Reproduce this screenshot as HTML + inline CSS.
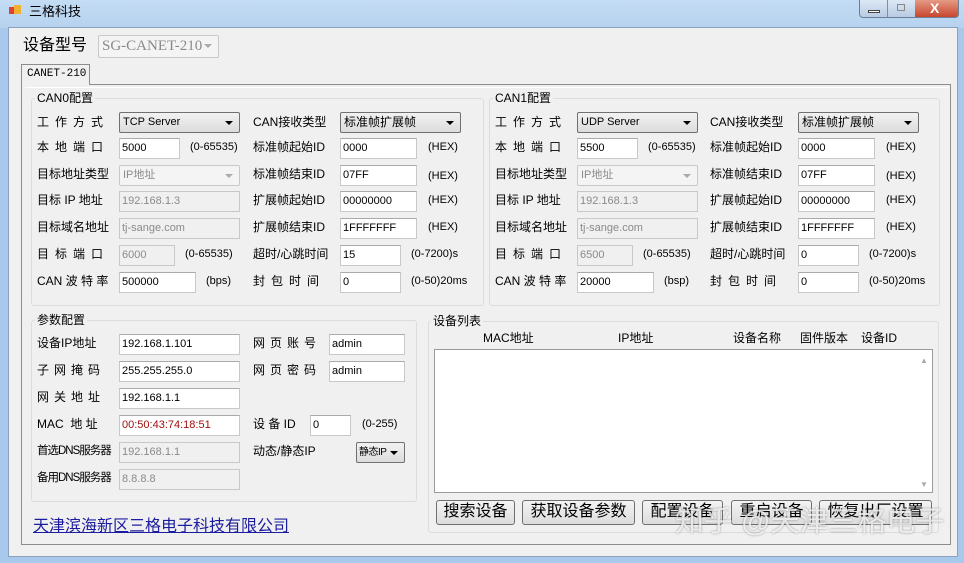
<!DOCTYPE html>
<html><head><meta charset="utf-8"><style>
*{margin:0;padding:0;box-sizing:border-box}
body{width:964px;height:563px;position:relative;overflow:hidden;background:#a9c9ec;font-family:"Liberation Sans","Noto Sans CJK SC",sans-serif;font-size:12px;color:#000}
div,span{position:absolute}
.t{white-space:nowrap;line-height:14px;font-size:12px}
.in{background:#fff;border:1px solid #c8c8c8;border-top-color:#aaa;height:21px;font-size:11px;line-height:19px;padding-left:2px;white-space:nowrap;overflow:hidden}
.dis{background:#f0f0f0;color:#8a8a8a;border-color:#c8c8c8}
.cb{border:1px solid #707070;border-radius:2px;height:21px;background:linear-gradient(#f2f2f2,#dcdcdc);font-size:11px;line-height:19px;padding-left:3px;white-space:nowrap}
.cb:after{content:"";position:absolute;right:6px;top:8px;border-left:4px solid transparent;border-right:4px solid transparent;border-top:4px solid #000}
.cbd{border-color:#c8c8c8;background:#f4f4f4;color:#8a8a8a}
.cbd:after{border-top-color:#aaa}
.grp{border:1px solid #dcdcdc;border-radius:3px}
.gl{background:#f0f0f0;padding:0 2px;font-size:12px;line-height:14px;white-space:nowrap}
.btn{border:1px solid #707070;border-radius:3px;background:linear-gradient(#f4f4f4,#dcdcdc);font-size:16px;text-align:center;line-height:22px;height:25px;white-space:nowrap}
</style></head><body>
<div style="left:0;top:0;width:964px;height:28px;background:linear-gradient(#c4dcf4,#b6d2ef)"></div>
<div style="left:9px;top:7px;width:7px;height:7px;background:#e04030"></div>
<div style="left:14px;top:5px;width:7px;height:9px;background:#f0b030"></div>
<div class="t" style="left:29px;top:5px;font-size:13px">三格科技</div>
<div style="left:859px;top:0;width:100px;height:18px;border:1px solid #6b7e98;border-top:0;border-radius:0 0 4px 4px;background:linear-gradient(#dce8f6,#b9cbe2);overflow:hidden">
 <div style="left:8px;top:10px;width:12px;height:3px;border:1px solid #444;background:#fff"></div>
 <div style="left:27px;top:0;width:1px;height:18px;background:#7d8ea8"></div>
 <div style="left:37px;top:4px;width:8px;height:7px;border:1px solid #888"></div>
 <div style="left:55px;top:0;width:45px;height:18px;background:linear-gradient(#e59a85,#c6412a)"></div>
 <div class="t" style="left:70px;top:1px;color:#fff;font-weight:bold;font-size:14px">X</div>
</div>
<div style="left:8px;top:27px;width:950px;height:530px;background:#f0f0f0;border:1px solid #8aa0bc"></div>
<div class="t" style="left:23px;top:37px;font-size:16px;line-height:18px">设备型号</div>
<div class="cb cbd" style="left:98px;top:35px;width:121px;height:23px;font-size:15px;line-height:21px;font-family:'Liberation Serif','Noto Serif CJK SC',serif">SG-CANET-210</div>
<div style="left:21px;top:84px;width:930px;height:461px;border:1px solid #8c8c8c;background:#f0f0f0"></div>
<div style="left:21px;top:64px;width:69px;height:21px;border:1px solid #8c8c8c;border-bottom:0;background:#f0f0f0"></div>
<div class="t" style="left:27px;top:67px;font-size:11px;font-family:'Liberation Mono',monospace">CANET-210</div>
<div style="left:25px;top:87px;width:924px;height:1px;background:#fff"></div>

<div class="grp" style="left:31px;top:98px;width:453px;height:208px"></div>
<div class="gl" style="left:35px;top:91px">CAN0配置</div>
<div class="grp" style="left:489px;top:98px;width:451px;height:208px"></div>
<div class="gl" style="left:493px;top:91px">CAN1配置</div>

<div class="t" style="left:37px;top:115px;letter-spacing:6px">工作方式</div>
<div class="cb" style="left:119px;top:112px;width:121px">TCP Server</div>
<div class="t" style="left:253px;top:115px">CAN接收类型</div>
<div class="cb" style="left:340px;top:112px;width:121px;font-size:12px">标准帧扩展帧</div>
<div class="t" style="left:37px;top:140px;letter-spacing:6px">本地端口</div>
<div class="in" style="left:119px;top:138px;width:61px">5000</div>
<div class="t" style="left:190px;top:140px;font-size:11px">(0-65535)</div>
<div class="t" style="left:253px;top:140px">标准帧起始ID</div>
<div class="in" style="left:340px;top:138px;width:77px">0000</div>
<div class="t" style="left:428px;top:140px;font-size:11px">(HEX)</div>
<div class="t" style="left:37px;top:167px">目标地址类型</div>
<div class="cb cbd" style="left:119px;top:165px;width:121px">IP地址</div>
<div class="t" style="left:253px;top:167px">标准帧结束ID</div>
<div class="in" style="left:340px;top:165px;width:77px">07FF</div>
<div class="t" style="left:428px;top:169px;font-size:11px">(HEX)</div>
<div class="t" style="left:37px;top:193px">目标 IP 地址</div>
<div class="in dis" style="left:119px;top:191px;width:121px">192.168.1.3</div>
<div class="t" style="left:253px;top:193px">扩展帧起始ID</div>
<div class="in" style="left:340px;top:191px;width:77px">00000000</div>
<div class="t" style="left:428px;top:193px;font-size:11px">(HEX)</div>
<div class="t" style="left:37px;top:220px">目标域名地址</div>
<div class="in dis" style="left:119px;top:218px;width:121px">tj-sange.com</div>
<div class="t" style="left:253px;top:220px">扩展帧结束ID</div>
<div class="in" style="left:340px;top:218px;width:77px">1FFFFFFF</div>
<div class="t" style="left:428px;top:220px;font-size:11px">(HEX)</div>
<div class="t" style="left:37px;top:247px;letter-spacing:6px">目标端口</div>
<div class="in dis" style="left:119px;top:245px;width:56px">6000</div>
<div class="t" style="left:185px;top:247px;font-size:11px">(0-65535)</div>
<div class="t" style="left:253px;top:247px">超时/心跳时间</div>
<div class="in" style="left:340px;top:245px;width:61px">15</div>
<div class="t" style="left:411px;top:247px;font-size:11px">(0-7200)s</div>
<div class="t" style="left:37px;top:274px">CAN 波 特 率</div>
<div class="in" style="left:119px;top:272px;width:77px">500000</div>
<div class="t" style="left:206px;top:274px;font-size:11px">(bps)</div>
<div class="t" style="left:253px;top:274px;letter-spacing:6px">封包时间</div>
<div class="in" style="left:340px;top:272px;width:61px">0</div>
<div class="t" style="left:411px;top:274px;font-size:11px">(0-50)20ms</div>

<div class="t" style="left:495px;top:115px;letter-spacing:6px">工作方式</div>
<div class="cb" style="left:577px;top:112px;width:121px">UDP Server</div>
<div class="t" style="left:710px;top:115px">CAN接收类型</div>
<div class="cb" style="left:798px;top:112px;width:121px;font-size:12px">标准帧扩展帧</div>
<div class="t" style="left:495px;top:140px;letter-spacing:6px">本地端口</div>
<div class="in" style="left:577px;top:138px;width:61px">5500</div>
<div class="t" style="left:648px;top:140px;font-size:11px">(0-65535)</div>
<div class="t" style="left:710px;top:140px">标准帧起始ID</div>
<div class="in" style="left:798px;top:138px;width:77px">0000</div>
<div class="t" style="left:886px;top:140px;font-size:11px">(HEX)</div>
<div class="t" style="left:495px;top:167px">目标地址类型</div>
<div class="cb cbd" style="left:577px;top:165px;width:121px">IP地址</div>
<div class="t" style="left:710px;top:167px">标准帧结束ID</div>
<div class="in" style="left:798px;top:165px;width:77px">07FF</div>
<div class="t" style="left:886px;top:169px;font-size:11px">(HEX)</div>
<div class="t" style="left:495px;top:193px">目标 IP 地址</div>
<div class="in dis" style="left:577px;top:191px;width:121px">192.168.1.3</div>
<div class="t" style="left:710px;top:193px">扩展帧起始ID</div>
<div class="in" style="left:798px;top:191px;width:77px">00000000</div>
<div class="t" style="left:886px;top:193px;font-size:11px">(HEX)</div>
<div class="t" style="left:495px;top:220px">目标域名地址</div>
<div class="in dis" style="left:577px;top:218px;width:121px">tj-sange.com</div>
<div class="t" style="left:710px;top:220px">扩展帧结束ID</div>
<div class="in" style="left:798px;top:218px;width:77px">1FFFFFFF</div>
<div class="t" style="left:886px;top:220px;font-size:11px">(HEX)</div>
<div class="t" style="left:495px;top:247px;letter-spacing:6px">目标端口</div>
<div class="in dis" style="left:577px;top:245px;width:56px">6500</div>
<div class="t" style="left:643px;top:247px;font-size:11px">(0-65535)</div>
<div class="t" style="left:710px;top:247px">超时/心跳时间</div>
<div class="in" style="left:798px;top:245px;width:61px">0</div>
<div class="t" style="left:869px;top:247px;font-size:11px">(0-7200)s</div>
<div class="t" style="left:495px;top:274px">CAN 波 特 率</div>
<div class="in" style="left:577px;top:272px;width:77px">20000</div>
<div class="t" style="left:664px;top:274px;font-size:11px">(bsp)</div>
<div class="t" style="left:710px;top:274px;letter-spacing:6px">封包时间</div>
<div class="in" style="left:798px;top:272px;width:61px">0</div>
<div class="t" style="left:869px;top:274px;font-size:11px">(0-50)20ms</div>

<div class="grp" style="left:31px;top:320px;width:386px;height:182px"></div>
<div class="gl" style="left:35px;top:313px">参数配置</div>
<div class="t" style="left:37px;top:336px">设备IP地址</div>
<div class="in" style="left:119px;top:334px;width:121px">192.168.1.101</div>
<div class="t" style="left:253px;top:336px;letter-spacing:5px">网页账号</div>
<div class="in" style="left:329px;top:334px;width:76px">admin</div>
<div class="t" style="left:37px;top:363px;letter-spacing:5px">子网掩码</div>
<div class="in" style="left:119px;top:361px;width:121px">255.255.255.0</div>
<div class="t" style="left:253px;top:363px;letter-spacing:5px">网页密码</div>
<div class="in" style="left:329px;top:361px;width:76px">admin</div>
<div class="t" style="left:37px;top:390px;letter-spacing:5px">网关地址</div>
<div class="in" style="left:119px;top:388px;width:121px">192.168.1.1</div>
<div class="t" style="left:37px;top:417px">MAC&nbsp;&nbsp;地&nbsp;址</div>
<div class="in" style="left:119px;top:415px;width:121px;color:#a01010">00:50:43:74:18:51</div>
<div class="t" style="left:253px;top:417px">设 备 ID</div>
<div class="in" style="left:310px;top:415px;width:41px">0</div>
<div class="t" style="left:362px;top:417px;font-size:11px">(0-255)</div>
<div class="t" style="left:37px;top:444px;letter-spacing:-1px;font-size:11.5px">首选DNS服务器</div>
<div class="in dis" style="left:119px;top:442px;width:121px">192.168.1.1</div>
<div class="t" style="left:253px;top:444px">动态/静态IP</div>
<div class="cb" style="left:356px;top:442px;width:49px;font-size:10px;padding-left:2px;letter-spacing:-0.5px">静态IP</div>
<div class="t" style="left:37px;top:471px;letter-spacing:-1px;font-size:11.5px">备用DNS服务器</div>
<div class="in dis" style="left:119px;top:469px;width:121px">8.8.8.8</div>

<div class="grp" style="left:428px;top:321px;width:511px;height:212px"></div>
<div class="gl" style="left:431px;top:314px">设备列表</div>
<div class="t" style="left:483px;top:331px">MAC地址</div>
<div class="t" style="left:618px;top:331px">IP地址</div>
<div class="t" style="left:733px;top:331px">设备名称</div>
<div class="t" style="left:800px;top:331px">固件版本</div>
<div class="t" style="left:861px;top:331px">设备ID</div>
<div style="left:434px;top:349px;width:499px;height:144px;background:#fff;border:1px solid #9a9a9a"></div>
<div class="t" style="left:920px;top:354px;font-size:8px;color:#aaa">▲</div>
<div class="t" style="left:920px;top:478px;font-size:8px;color:#aaa">▼</div>
<div class="btn" style="left:436px;top:500px;width:79px">搜索设备</div>
<div class="btn" style="left:522px;top:500px;width:113px">获取设备参数</div>
<div class="btn" style="left:642px;top:500px;width:81px">配置设备</div>
<div class="btn" style="left:731px;top:500px;width:81px">重启设备</div>
<div class="btn" style="left:819px;top:500px;width:113px">恢复出厂设置</div>
<div class="t" style="left:675px;top:505px;font-size:29px;line-height:34px;color:rgba(255,255,255,0.75);text-shadow:0 0 2px rgba(90,90,90,0.6)">知乎 @天津三格电子</div>

<div class="t" style="left:33px;top:517px;font-size:16px;line-height:20px;color:#1c1ca0;text-decoration:underline">天津滨海新区三格电子科技有限公司</div>
</body></html>
